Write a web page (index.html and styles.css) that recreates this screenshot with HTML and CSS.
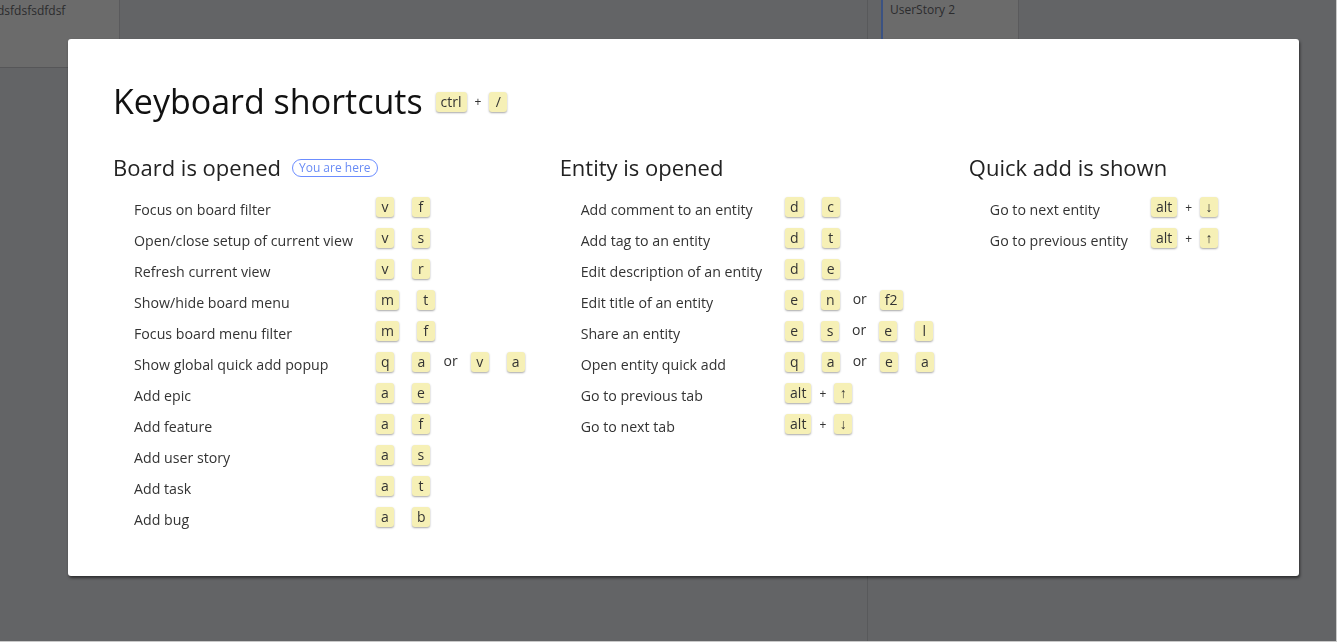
FILE: index.html
```html
<!DOCTYPE html>
<html>
<head>
<meta charset="utf-8">
<link rel="stylesheet" href="styles.css">
</head>
<body>
<div class="board">
  <div class="lane lane-a"><div class="card card-a"><span class="card-text">dsfdsfsdfdsf</span></div></div>
  <div class="lane lane-b"></div>
  <div class="lane lane-c"><div class="card card-c">UserStory 2</div></div>
</div>
<div class="modal">
  <h1 class="title">Keyboard shortcuts <span class="combo"><kbd>ctrl</kbd><span class="plus">+</span><kbd>/</kbd></span></h1>
  <div class="groups">
    <section class="group">
      <h2 class="group-title">Board is opened <span class="here">You are here</span></h2>
      <div class="rows">
        <div class="label">Focus on board filter</div><div class="keys"><kbd>v</kbd><kbd>f</kbd></div>
        <div class="label">Open/close setup of current view</div><div class="keys"><kbd>v</kbd><kbd>s</kbd></div>
        <div class="label">Refresh current view</div><div class="keys"><kbd>v</kbd><kbd>r</kbd></div>
        <div class="label">Show/hide board menu</div><div class="keys"><kbd>m</kbd><kbd>t</kbd></div>
        <div class="label">Focus board menu filter</div><div class="keys"><kbd>m</kbd><kbd>f</kbd></div>
        <div class="label">Show global quick add popup</div><div class="keys"><kbd>q</kbd><kbd>a</kbd><span class="or">or</span><kbd>v</kbd><kbd>a</kbd></div>
        <div class="label">Add epic</div><div class="keys"><kbd>a</kbd><kbd>e</kbd></div>
        <div class="label">Add feature</div><div class="keys"><kbd>a</kbd><kbd>f</kbd></div>
        <div class="label">Add user story</div><div class="keys"><kbd>a</kbd><kbd>s</kbd></div>
        <div class="label">Add task</div><div class="keys"><kbd>a</kbd><kbd>t</kbd></div>
        <div class="label">Add bug</div><div class="keys"><kbd>a</kbd><kbd>b</kbd></div>
      </div>
    </section>
    <section class="group">
      <h2 class="group-title">Entity is opened</h2>
      <div class="rows">
        <div class="label">Add comment to an entity</div><div class="keys"><kbd>d</kbd><kbd>c</kbd></div>
        <div class="label">Add tag to an entity</div><div class="keys"><kbd>d</kbd><kbd>t</kbd></div>
        <div class="label">Edit description of an entity</div><div class="keys"><kbd>d</kbd><kbd>e</kbd></div>
        <div class="label">Edit title of an entity</div><div class="keys"><kbd>e</kbd><kbd>n</kbd><span class="or">or</span><kbd>f2</kbd></div>
        <div class="label">Share an entity</div><div class="keys"><kbd>e</kbd><kbd>s</kbd><span class="or">or</span><kbd>e</kbd><kbd>l</kbd></div>
        <div class="label">Open entity quick add</div><div class="keys"><kbd>q</kbd><kbd>a</kbd><span class="or">or</span><kbd>e</kbd><kbd>a</kbd></div>
        <div class="label">Go to previous tab</div><div class="keys"><kbd>alt</kbd><span class="plus">+</span><kbd>↑</kbd></div>
        <div class="label">Go to next tab</div><div class="keys"><kbd>alt</kbd><span class="plus">+</span><kbd>↓</kbd></div>
      </div>
    </section>
    <section class="group">
      <h2 class="group-title">Quick add is shown</h2>
      <div class="rows">
        <div class="label">Go to next entity</div><div class="keys"><kbd>alt</kbd><span class="plus">+</span><kbd>↓</kbd></div>
        <div class="label">Go to previous entity</div><div class="keys"><kbd>alt</kbd><span class="plus">+</span><kbd>↑</kbd></div>
      </div>
    </section>
  </div>
</div>
</body>
</html>
```
FILE: styles.css
```css
html, body {
  margin: 0;
  padding: 0;
  height: 100%;
  overflow: hidden;
}
body {
  background: #636466;
  font-family: "Open Sans", "Liberation Sans", sans-serif;
  color: #333;
}
.board {
  display: flex;
  height: 641px;
  width: 1336px;
  border-right: 1px solid #c9c9c9;
  border-bottom: 1px solid #c9c9c9;
}
.lane-a {
  width: 120px;
}
.lane-b {
  width: 747px;
  border-right: 1px solid #58595b;
}
.lane-c {
  padding-left: 13px;
}
.card {
  background: #6b6b6b;
  font-size: 12px;
  color: #2c2c2e;
  box-sizing: border-box;
}
.card-a {
  width: 120px;
  height: 68px;
  border-right: 1px solid #5a5a5c;
  border-bottom: 1px solid #565658;
  overflow: hidden;
  padding-top: 2px;
  white-space: nowrap;
}
.card-text {
  display: block;
  margin-left: -3px;
}
.card-c {
  width: 138px;
  height: 45px;
  border-left: 2px solid #3b5282;
  border-right: 1px solid #5a5a5c;
  padding: 1px 0 0 7px;
}
.modal {
  position: fixed;
  top: 39px;
  left: 68px;
  width: 1231px;
  height: 537px;
  box-sizing: border-box;
  background: #fff;
  border-radius: 3px;
  box-shadow: 1px 2px 3px rgba(0, 0, 0, 0.55);
  padding: 36px 45px 0 45px;
}
.title {
  margin: 0;
  font-size: 34px;
  font-weight: 500;
  color: #111;
  display: flex;
  align-items: center;
  line-height: 50px;
}
.combo {
  display: flex;
  align-items: center;
  margin-left: 13px;
  margin-top: 2px;
}
kbd {
  display: inline-block;
  font-family: "Open Sans", "Liberation Sans", sans-serif;
  font-size: 14px;
  line-height: 20px;
  height: 20px;
  padding: 0 5px;
  min-width: 8px;
  text-align: center;
  background: #f6f0b6;
  color: #333;
  border-radius: 3px;
  box-shadow: 0 1px 2px rgba(0, 0, 0, 0.35);
}
.plus {
  font-size: 12px;
  margin: 0 8px;
  color: #333;
}
.or {
  font-size: 14px;
  margin: -3px 13px 0;
  color: #333;
}
.groups {
  display: flex;
  margin-top: 24px;
  gap: 35px;
}
.group-title {
  margin: 0 0 12px;
  font-size: 22px;
  font-weight: 400;
  color: #222;
  line-height: 32px;
  display: flex;
  align-items: center;
}
.here {
  font-size: 12px;
  color: #6a8cf5;
  border: 1px solid #6c8dff;
  border-radius: 10px;
  line-height: 16px;
  padding: 0 6px;
  margin-left: 11px;
  margin-top: 1px;
}
.rows {
  display: grid;
  grid-template-columns: auto auto;
  column-gap: 23px;
  row-gap: 5px;
  padding-left: 21px;
  align-items: start;
}
.label {
  font-size: 14.2px;
  line-height: 22px;
  padding-top: 4px;
  color: #333;
}
.keys {
  display: flex;
  align-items: center;
  height: 24px;
  align-self: start;
}
kbd + kbd {
  margin-left: 18px;
}
.or + kbd, .plus + kbd {
  margin-left: 0;
}
```
